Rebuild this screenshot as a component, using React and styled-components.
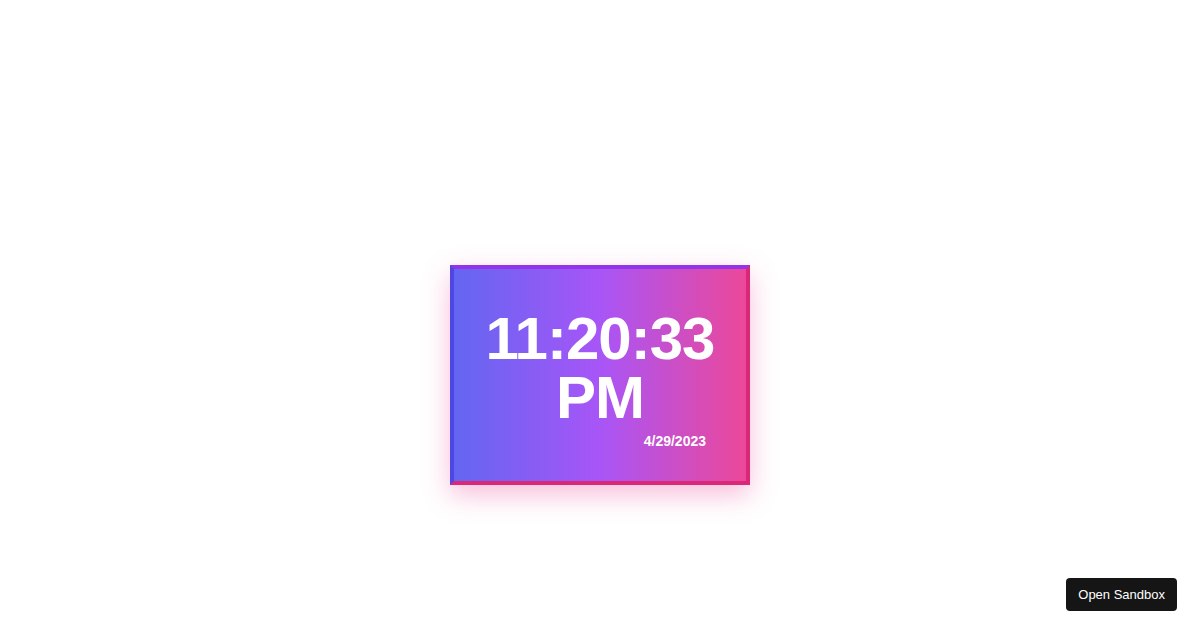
import React from 'react'
import styled, { createGlobalStyle } from 'styled-components'

const GlobalStyle = createGlobalStyle`
  html, body {
    margin: 0;
    padding: 0;
    background: #ffffff;
    font-family: "Liberation Sans", Arial, sans-serif;
  }
`

const Page = styled.div`
  height: 100vh;
  box-sizing: border-box;
  padding-top: 120px;
  display: flex;
  align-items: center;
  justify-content: center;
`

const Card = styled.div`
  width: 300px;
  height: 220px;
  box-sizing: border-box;
  border: 4px solid;
  border-color: #9333ea #db2777 #db2777 #4f46e5;
  background: linear-gradient(to right, #6366f1, #a855f7, #ec4899);
  box-shadow: 0 10px 25px rgba(236, 72, 153, 0.35);
  color: #ffffff;
  display: flex;
  flex-direction: column;
  padding: 40px 0 0;
`

const Time = styled.h1`
  margin: 0 20px;
  font-size: 60px;
  line-height: 59px;
  font-weight: 700;
  text-align: center;
  letter-spacing: -1px;
`

const DateText = styled.p`
  margin: 6px 40px 0 0;
  align-self: flex-end;
  font-size: 14px;
  font-weight: 700;
`

const SandboxButton = styled.button`
  position: fixed;
  right: 23px;
  bottom: 19px;
  height: 33px;
  padding: 0 12px;
  border: none;
  border-radius: 4px;
  background: #151515;
  color: #ffffff;
  font-family: "Liberation Sans", Arial, sans-serif;
  font-size: 13px;
`

const App = () => {
  return (
    <>
      <GlobalStyle/>
      <Page>
        <Card>
          <Time>11:20:33 PM</Time>
          <DateText>4/29/2023</DateText>
        </Card>
      </Page>
      <SandboxButton>Open Sandbox</SandboxButton>
    </>
  )
}

export default App
